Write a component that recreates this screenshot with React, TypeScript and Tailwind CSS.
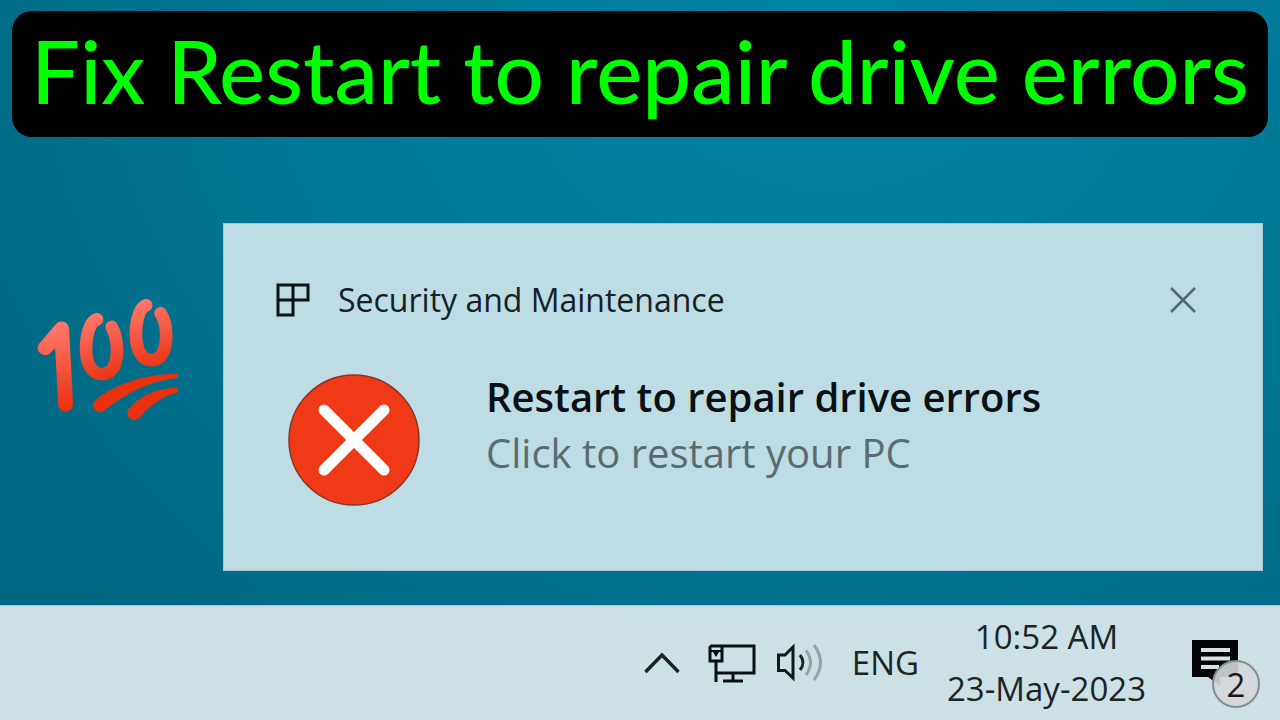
import React, { useState } from 'react';

const HundredIcon: React.FC = () => (
  <svg viewBox="50 54 426 370" className="w-[142px] h-[123px] shrink-0" fill="none" strokeLinecap="round" strokeLinejoin="round" aria-label="100">
    <defs>
      <linearGradient id="one" gradientUnits="userSpaceOnUse" x1="90" y1="140" x2="130" y2="395">
        <stop offset="0" stopColor="#ff786c" />
        <stop offset="1" stopColor="#e9300f" />
      </linearGradient>
      <linearGradient id="zeroA" gradientUnits="userSpaceOnUse" x1="205" y1="105" x2="260" y2="300">
        <stop offset="0" stopColor="#ff786c" />
        <stop offset="1" stopColor="#ea3514" />
      </linearGradient>
      <linearGradient id="zeroB" gradientUnits="userSpaceOnUse" x1="355" y1="65" x2="410" y2="260">
        <stop offset="0" stopColor="#ff786c" />
        <stop offset="1" stopColor="#ea3514" />
      </linearGradient>
    </defs>
    <path d="M123 125C135 125 145 133 146 148L158 372C159 386 149 396 136 396C123 396 114 387 113 373L104 205L89 220C80 229 66 227 58 219C49 210 50 197 59 188L106 133C111 127 116 125 123 125Z" fill="url(#one)" />
    <path d="M230 118C212 122 198 158 197 203C196 252 216 283 245 283C277 283 292 250 290 205C289 180 283 157 274 141" stroke="url(#zeroA)" strokeWidth="38" />
    <path d="M378 76C360 81 347 116 347 162C347 210 365 241 393 241C424 241 439 208 438 164C438 139 431 115 421 100" stroke="url(#zeroB)" strokeWidth="38" />
    <path d="M224 362C280 315 370 284 465 282C475 282 479 292 470 295C386 305 315 342 250 394C228 407 208 381 224 362Z" fill="#e9300f" />
    <path d="M327 386C357 349 407 326 465 323C475 323 479 335 471 338C425 350 388 378 358 414C338 432 309 408 327 386Z" fill="#e9300f" />
  </svg>
);

const SecurityIcon: React.FC = () => (
  <svg viewBox="0 0 34 34" className="w-[34px] h-[34px]" fill="none" stroke="#0a1215" strokeWidth="3">
    <path d="M2 2H32V17H2ZM17 2V32H2V2" />
  </svg>
);

const ErrorIcon: React.FC = () => (
  <svg viewBox="0 0 132 132" className="w-[132px] h-[132px] shrink-0">
    <circle cx="66" cy="66" r="65" fill="#f03a17" stroke="#8c3324" strokeWidth="1.5" />
    <path d="M36 36L96 96M96 36L36 96" stroke="#fff" strokeWidth="11" strokeLinecap="round" />
  </svg>
);

const ChevronIcon: React.FC = () => (
  <svg viewBox="0 0 36 22" className="w-9 h-[22px]" fill="none" stroke="#1c2326" strokeWidth="3.5">
    <path d="M1.5 20L18 3L34.5 20" />
  </svg>
);

const NetworkIcon: React.FC = () => (
  <svg viewBox="0 0 48 40" className="w-12 h-10" fill="none" stroke="#0a1012" strokeWidth="3">
    <path d="M2 3H46V30H9M2 3V18H14V3M8 18V39M25 30V38M15 38H35" />
    <path d="M3 8H13" strokeWidth="2" />
    <path d="M5 9H11L8 14Z" fill="#0a1012" stroke="none" />
  </svg>
);

const VolumeIcon: React.FC = () => (
  <svg viewBox="0 0 48 42" className="w-12 h-[42px]" fill="none" strokeWidth="3">
    <path d="M2.5 13H9L17 5V36L9 28.5H2.5Z" stroke="#11181a" />
    <path d="M24 13Q30 20.5 24 28" stroke="#1c2427" />
    <path d="M30 8.5Q39 20.5 30 33" stroke="#93a4aa" />
    <path d="M38 3Q51 20.5 38 38" stroke="#93a4aa" />
  </svg>
);

const ActionCenterIcon: React.FC = () => (
  <svg viewBox="0 0 46 46" className="w-[46px] h-[46px]">
    <path d="M0 0H46V37H28V46L16 37H0Z" fill="#030506" />
    <path d="M9 10H38M9 18.5H38M9 27H27" stroke="#d3e3e8" strokeWidth="4" />
  </svg>
);

const Toast: React.FC<{ onClose: () => void }> = ({ onClose }) => (
  <section className="flex-1 bg-[#bedce3] border border-[#a2c9d3] pl-[52px] pr-[66px] pt-[54px] pb-16">
    <header className="flex items-center">
      <SecurityIcon />
      <h2 className="flex-1 ml-7 text-[32px] leading-[44px] text-[#152126]">Security and Maintenance</h2>
      <button onClick={onClose} aria-label="Close" className="p-0">
        <svg viewBox="0 0 26 26" className="w-[26px] h-[26px]" stroke="#56666c" strokeWidth="2.5">
          <path d="M1 1L25 25M25 1L1 25" />
        </svg>
      </button>
    </header>
    <div className="flex items-start mt-[52px] pl-3 gap-[66px]">
      <ErrorIcon />
      <div className="text-[40px] leading-[46px]">
        <h3 className="font-semibold text-[#091114]">Restart to repair drive errors</h3>
        <p className="mt-[10px] text-[#5b6b70]">Click to restart your PC</p>
      </div>
    </div>
  </section>
);

const Taskbar: React.FC = () => (
  <footer className="h-[115px] flex items-center justify-end bg-[#cce0e6] border-t border-[#9fc6d1] pr-5 text-[33px] text-[#1b2427]">
    <button aria-label="Show hidden icons"><ChevronIcon /></button>
    <button aria-label="Network" className="ml-7"><NetworkIcon /></button>
    <button aria-label="Volume" className="ml-5"><VolumeIcon /></button>
    <button className="ml-7">ENG</button>
    <div className="ml-7 text-center leading-[52px]">
      <div>10:52 AM</div>
      <div>23-May-2023</div>
    </div>
    <button aria-label="Notifications" className="relative ml-[46px] mr-[22px]">
      <ActionCenterIcon />
      <span className="absolute left-5 top-5 w-12 h-12 rounded-full border-2 border-[#858d90] bg-[#d5d7da]/90 flex items-center justify-center text-[33px] leading-none font-medium text-[#15191b]">2</span>
    </button>
  </footer>
);

const App: React.FC = () => {
  const [open, setOpen] = useState(true);

  return (
    <div className="min-h-screen flex flex-col overflow-hidden font-['Open_Sans','Noto_Sans',sans-serif] bg-[radial-gradient(ellipse_at_65%_0%,#0083a4_0%,#007896_45%,#006580_90%)]">
      <h1 className="mx-3 mt-[11px] h-[126px] rounded-[20px] bg-black text-[#00ff00] text-[87px] leading-[120px] font-medium font-['Lato',sans-serif] text-center whitespace-nowrap">
        Fix Restart to repair drive errors
      </h1>
      <main className="flex-1 flex items-end pl-[37px] pr-[17px] pb-[34px] gap-11">
        <div className="pb-[150px]"><HundredIcon /></div>
        {open && <Toast onClose={() => setOpen(false)} />}
      </main>
      <Taskbar />
    </div>
  );
};

export default App;
